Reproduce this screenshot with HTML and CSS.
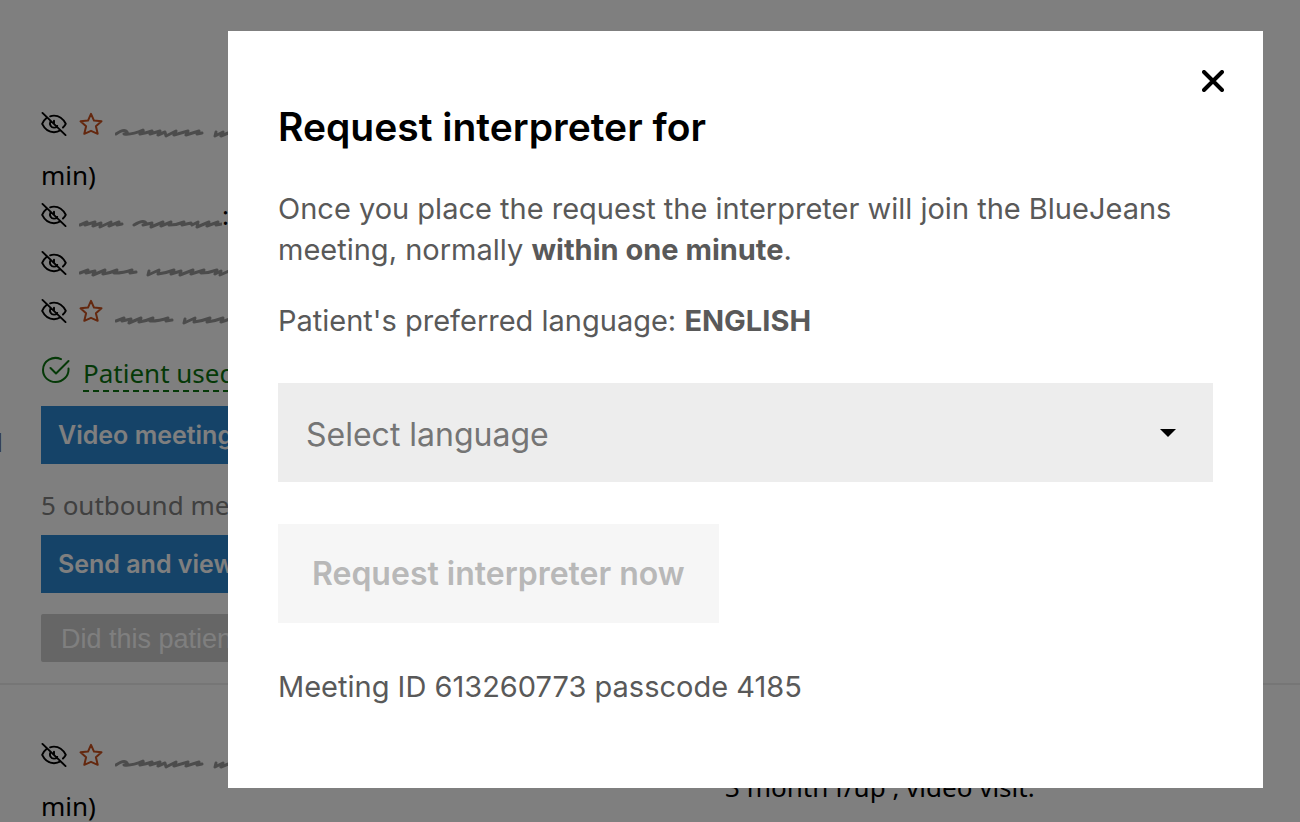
FILE: index.html
```
<!DOCTYPE html>
<html lang="en">
<head>
    <meta charset="UTF-8">
    <meta name="viewport" content="width=device-width, initial-scale=1.0">
    <title>Request interpreter</title>
    <link rel="stylesheet" href="styles.css">
</head>
<body>

    <!-- shared icons -->
    <svg class="hidden" xmlns="http://www.w3.org/2000/svg">
        <symbol id="eye-off" viewBox="0 0 27 26">
            <path d="M1.5 1.5L25.5 24.5M6 6.5C4 8 2.5 10 1.2 12.8C4 18.500 8.500 21.500 13.500 21.500C16 21.500 18.300 20.800 20.300 19.500M9.500 5C10.800 4.500 12 4.300 13.500 4.300C18.500 4.300 23 7.500 25.700 12.800C25 14.300 24 15.600 22.800 16.700M9.800 10.200C8.300 13.500 10.500 16.800 13.500 16.800C15 16.800 16.200 16 16.800 15M13.500 9.500V12.500"/>
        </symbol>
        <symbol id="star" viewBox="0 0 24 24">
            <path d="M12 1.800L15 8.600L22.500 9.300L16.900 14.200L18.700 21.800L12 18.800L5.300 21.800L7.100 14.200L1.500 9.300L9 8.600Z"/>
        </symbol>
        <symbol id="check-circle" viewBox="0 0 30 28">
            <path d="M20 3.200C12 -0.500 2 4.500 2 14C2 21 7.500 26 14.500 26C22 26 28 20 27.500 12.500M9.500 12L15 17.500L27.500 5"/>
        </symbol>
    </svg>

    <main>
        <section class="visit">
            <div class="time"><span>scheduled</span></div>
            <div class="details">
                <div class="person first">
                    <svg class="icon eye"><use href="#eye-off"/></svg>
                    <svg class="icon star"><use href="#star"/></svg>
                    <svg class="name" viewBox="0 0 120 13"><path d="M1 8Q8 3 11 5T9 8Q17 9 28 4Q29 5 25 8Q31 7 37 5L35 8L45 5L43 9L50 6L51 10L61 5L59 9L73 5L71 9L84 5L82 8L87 7M101 6L100 10L108 6L106 10L118 5"/></svg>
                </div>
                <p class="duration">min)</p>
                <div class="person">
                    <svg class="icon eye"><use href="#eye-off"/></svg>
                    <svg class="name" viewBox="0 0 143 13"><path d="M1 8L8 5L6 8L16 5L14 9L22 6L21 10L32 5L30 9L40 5L38 8L43 7M55 8Q63 3 66 5T64 8L73 6L72 10L84 5L82 9L92 5L90 8Q98 8 105 5L103 8L112 6L113 8L119 5L118 10L130 5L128 9L139 5L137 8L143 7"/></svg>
                    <span>:</span>
                </div>
                <div class="person">
                    <svg class="icon eye"><use href="#eye-off"/></svg>
                    <svg class="name" viewBox="0 0 152 13"><path d="M1 8L9 5L7 8L16 6L14 10L26 5L24 9Q31 8 38 5L35 8Q45 8 53 5L51 8L57 7M70 6L69 10L80 5L79 9Q87 8 95 5L92 9L102 6L101 10L114 5L112 9L125 5L122 8Q130 8 138 5L136 9L142 6L141 10L152 5"/></svg>
                </div>
                <div class="person">
                    <svg class="icon eye"><use href="#eye-off"/></svg>
                    <svg class="icon star"><use href="#star"/></svg>
                    <svg class="name" viewBox="0 0 120 13"><path d="M1 8L9 5L7 8L16 6L14 10L26 5L24 9Q31 8 38 5L35 8Q45 8 53 5L51 8L57 7M70 6L69 10L80 5L79 9Q87 8 95 5L92 9Q100 8 108 5L106 9L118 5"/></svg>
                </div>
                <div class="status">
                    <svg class="icon check"><use href="#check-circle"/></svg>
                    <a href="#">Patient used video</a>
                </div>
                <button class="action">Video meeting</button>
                <p class="messages">5 outbound messages</p>
                <button class="action">Send and view messages</button>
                <button class="answer" disabled>Did this patient attend?</button>
            </div>
            <p class="notes">3 month f/up , video visit.</p>
        </section>

        <section class="visit">
            <div class="time"></div>
            <div class="details">
                <div class="person first">
                    <svg class="icon eye"><use href="#eye-off"/></svg>
                    <svg class="icon star"><use href="#star"/></svg>
                    <svg class="name" viewBox="0 0 120 13"><path d="M1 8Q8 3 11 5T9 8Q17 9 28 4Q29 5 25 8Q31 7 37 5L35 8L45 5L43 9L50 6L51 10L61 5L59 9L73 5L71 9L84 5L82 8L87 7M101 6L100 10L108 6L106 10L118 5"/></svg>
                </div>
                <p class="duration">min)</p>
            </div>
            <p class="notes">3 month f/up , video visit.</p>
        </section>
    </main>

    <div class="overlay">
        <div class="modal" role="dialog" aria-modal="true" aria-labelledby="modal-title">
            <button class="close" aria-label="Close">
                <svg viewBox="0 0 22 22"><path d="M2 2L20 20M20 2L2 20"/></svg>
            </button>
            <h2 id="modal-title">Request interpreter for</h2>
            <p>Once you place the request the interpreter will join the BlueJeans meeting, normally <strong>within one minute</strong>.</p>
            <p>Patient's preferred language: <strong>ENGLISH</strong></p>
            <div class="select-box">
                <select id="language" aria-label="Language">
                    <option>Select language</option>
                    <option>Spanish</option>
                </select>
                <svg class="arrow" viewBox="0 0 16 8"><path d="M0 0H16L8 8Z"/></svg>
            </div>
            <button class="request" disabled>Request interpreter now</button>
            <p class="meeting">Meeting ID 613260773 passcode 4185</p>
        </div>
    </div>

</body>
</html>
```
FILE: styles.css
```
body {
    margin: 0;
    height: 100vh;
    overflow: hidden;
    font-family: "Noto Sans", sans-serif;
    font-size: 26px;
    color: #000;
    background: white;
}
p, h2 {
    margin: 0;
}
button, select {
    border: none;
    border-radius: 0;
    font-family: Inter, sans-serif;
    cursor: pointer;
}
.hidden { display: none; }

/* schedule behind the dialog */
main {
    padding-top: 54px;
}
.visit {
    display: grid;
    grid-template-columns: 41px 684px 1fr;
    border-bottom: 2px solid #ececec;
    padding-bottom: 21px;
}
.time {
    display: flex;
    justify-content: flex-end;
    width: 3px;
    padding-top: 370px;
    overflow: hidden;
    color: #666;
}
.details {
    display: flex;
    flex-direction: column;
    padding-top: 44px;
    white-space: nowrap;
}
.person {
    display: flex;
    align-items: center;
    height: 48px;
}
.first {
    height: 52px;
}
.icon {
    flex: none;
    fill: none;
    stroke: #000;
    stroke-width: 2;
    stroke-linecap: round;
    stroke-linejoin: round;
}
.eye {
    width: 26px;
    height: 26px;
}
.star {
    width: 24px;
    height: 24px;
    margin-left: 12px;
    stroke: #c8501e;
}
.check {
    width: 30px;
    height: 28px;
    stroke: #0a730f;
}
.name {
    height: 13px;
    margin: 16px 0 0 12px;
    fill: none;
    stroke: #999;
    stroke-width: 3;
    stroke-linecap: round;
    stroke-linejoin: round;
}
.duration {
    padding-top: 9px;
    line-height: 32px;
}
.status {
    display: flex;
    align-items: flex-start;
    gap: 12px;
    height: 50px;
    padding-top: 21px;
}
.status a {
    color: #0a730f;
    line-height: 34px;
    text-decoration: none;
    border-bottom: 2px dashed #0a730f;
}
.action {
    align-self: flex-start;
    height: 58px;
    padding: 0 17px;
    background: #2b86d0;
    color: white;
    font-size: 25px;
    font-weight: 600;
}
.messages {
    padding-top: 12px;
    color: #808080;
    line-height: 59px;
}
.answer {
    align-self: flex-start;
    height: 48px;
    margin-top: 21px;
    padding: 2px 20px 0;
    border-radius: 2px;
    background: #ccc;
    color: white;
    font-family: "Liberation Sans", Arial, sans-serif;
    font-size: 27px;
}
.notes {
    padding-top: 82px;
    line-height: 40px;
}

/* dialog */
.overlay {
    position: fixed;
    inset: 0;
    padding: 31px 37px 0 228px;
    background: rgba(0, 0, 0, 0.5);
}
.modal {
    display: flex;
    flex-direction: column;
    align-items: flex-start;
    padding: 36px 50px 81px;
    background: white;
    color: #595959;
    font-family: Inter, sans-serif;
    font-size: 29px;
    line-height: 41px;
}
.close {
    align-self: flex-end;
    display: flex;
    margin-right: -14px;
    padding: 3px;
    background: none;
}
.close svg {
    width: 22px;
    height: 22px;
    fill: none;
    stroke: #000;
    stroke-width: 4;
    stroke-linecap: round;
}
.modal h2 {
    margin: 8px 0 37px;
    color: #000;
    font-size: 39px;
    font-weight: 600;
    line-height: 48px;
}
.modal p {
    margin-bottom: 30px;
}
.select-box {
    display: grid;
    align-items: center;
    width: 100%;
    margin: 12px 0 42px;
}
.select-box select {
    grid-area: 1 / 1;
    width: 100%;
    height: 99px;
    padding: 4px 90px 0 28px;
    appearance: none;
    background: #ededed;
    color: #757575;
    font-size: 32px;
}
.arrow {
    grid-area: 1 / 1;
    justify-self: end;
    width: 16px;
    height: 8px;
    margin-right: 37px;
    pointer-events: none;
}
.request {
    height: 99px;
    padding: 0 34px;
    background: #f6f6f6;
    color: #b8b8b8;
    font-size: 32px;
    font-weight: 600;
}
.modal .meeting {
    margin: 43px 0 0;
}
```
